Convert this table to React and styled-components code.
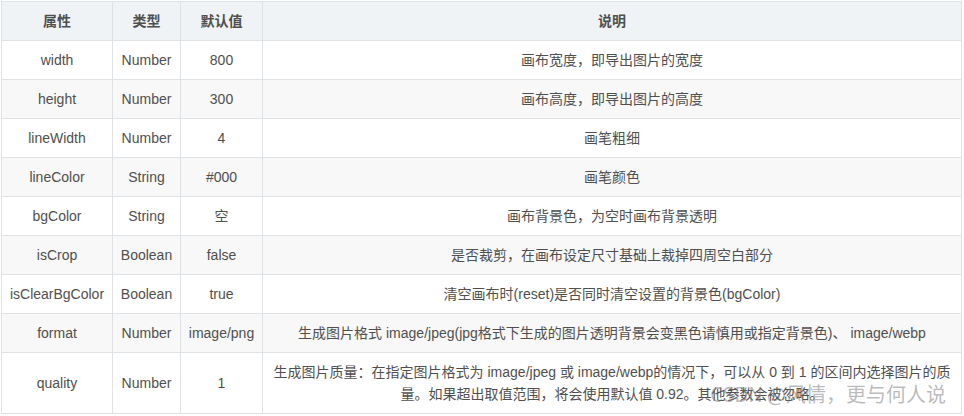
import React from "react";
import styled, { createGlobalStyle } from "styled-components";

const rows = [
  ["width", "Number", "800", "画布宽度，即导出图片的宽度"],
  ["height", "Number", "300", "画布高度，即导出图片的高度"],
  ["lineWidth", "Number", "4", "画笔粗细"],
  ["lineColor", "String", "#000", "画笔颜色"],
  ["bgColor", "String", "空", "画布背景色，为空时画布背景透明"],
  ["isCrop", "Boolean", "false", "是否裁剪，在画布设定尺寸基础上裁掉四周空白部分"],
  ["isClearBgColor", "Boolean", "true", "清空画布时(reset)是否同时清空设置的背景色(bgColor)"],
  ["format", "Number", "image/png", "生成图片格式 image/jpeg(jpg格式下生成的图片透明背景会变黑色请慎用或指定背景色)、 image/webp"],
];

const GlobalStyle = createGlobalStyle`
  body {
    margin: 0;
    padding: 0;
    background: #fff;
    font-family: "Liberation Sans", Arial, "Noto Sans CJK SC", sans-serif;
  }
`;

const Wrapper = styled.div`
  position: relative;
  padding: 1px 0 0 1px;
  width: 961px;
`;

const Table = styled.table`
  border-collapse: separate;
  border-spacing: 0;
  table-layout: fixed;
  width: 961px;
  border-top: 1px solid #dfe2e5;
  border-left: 1px solid #dfe2e5;
  font-size: 14px;
  color: #4f4f4f;
`;

const Th = styled.th`
  background: #eff3f5;
  font-weight: bold;
  color: #4f4f4f;
  height: 22px;
  line-height: 22px;
  padding: 8px 4px;
  border-right: 1px solid #dfe2e5;
  border-bottom: 1px solid #dfe2e5;
  text-align: center;
`;

const Tr = styled.tr`
  background: ${({ $striped }) => ($striped ? "#f8f8f8" : "#fff")};
`;

const Td = styled.td`
  line-height: 22px;
  padding: 8px 4px;
  border-right: 1px solid #dfe2e5;
  border-bottom: 1px solid #dfe2e5;
  text-align: center;
  white-space: nowrap;
`;

const Watermark = styled.div`
  position: absolute;
  right: 16px;
  bottom: 6px;
  font-family: "Noto Sans CJK SC", sans-serif;
  font-size: 20px;
  color: rgba(120, 120, 120, 0.5);
  pointer-events: none;
`;

export default function App() {
  return (
    <>
      <GlobalStyle />
      <Wrapper>
        <Table>
          <colgroup>
            <col style={{ width: 111 }} />
            <col style={{ width: 68 }} />
            <col style={{ width: 82 }} />
            <col style={{ width: 699 }} />
          </colgroup>
          <thead>
            <tr>
              <Th>属性</Th>
              <Th>类型</Th>
              <Th>默认值</Th>
              <Th>说明</Th>
            </tr>
          </thead>
          <tbody>
            {rows.map((r, i) => (
              <Tr key={r[0]} $striped={i % 2 === 1}>
                <Td>{r[0]}</Td>
                <Td>{r[1]}</Td>
                <Td>{r[2]}</Td>
                <Td>{r[3]}</Td>
              </Tr>
            ))}
            <Tr>
              <Td>quality</Td>
              <Td>Number</Td>
              <Td>1</Td>
              <Td>
                生成图片质量：在指定图片格式为 image/jpeg 或 image/webp的情况下，可以从 0 到 1 的区间内选择图片的质
                <br />
                量。如果超出取值范围，将会使用默认值 0.92。其他参数会被忽略。
              </Td>
            </Tr>
          </tbody>
        </Table>
        <Watermark>CSDN @风情，更与何人说</Watermark>
      </Wrapper>
    </>
  );
}
